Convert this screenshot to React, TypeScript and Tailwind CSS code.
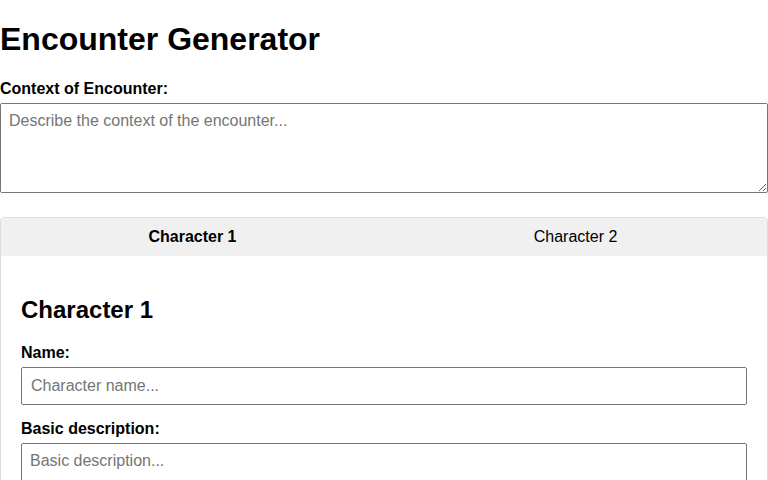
export default function App() {
  return (
    <div className="font-['Liberation_Sans',Arial,sans-serif] text-black bg-white">
      <h1 className="text-[32px] font-bold leading-[normal] my-[21.44px]">Encounter Generator</h1>

      <label className="block font-bold text-base leading-[normal] mb-[5px]">Context of Encounter:</label>
      <textarea
        className="block w-full h-[90px] p-2 border border-[#767676] rounded-[2px] text-base leading-[normal] placeholder:text-[#757575]"
        placeholder="Describe the context of the encounter..."
      />

      <div className="mt-6 border border-[#dddddd] rounded-[4px] overflow-hidden">
        <div className="flex bg-[#f0f0f0] h-[38px]">
          <button className="flex-1 flex items-center justify-center font-bold text-base">Character 1</button>
          <button className="flex-1 flex items-center justify-center text-base">Character 2</button>
        </div>

        <div className="p-5">
          <h2 className="text-2xl font-bold leading-[normal] my-[19.92px]">Character 1</h2>

          <label className="block font-bold text-base leading-[normal] mb-[5px]">Name:</label>
          <input
            className="block w-full h-[38px] px-[9px] border border-[#767676] rounded-[2px] text-base placeholder:text-[#757575]"
            placeholder="Character name..."
          />

          <label className="block font-bold text-base leading-[normal] mt-[15px] mb-[5px]">Basic description:</label>
          <textarea
            className="block w-full h-[90px] p-2 border border-[#767676] rounded-[2px] text-base leading-[normal] placeholder:text-[#757575]"
            placeholder="Basic description..."
          />
        </div>
      </div>
    </div>
  );
}
